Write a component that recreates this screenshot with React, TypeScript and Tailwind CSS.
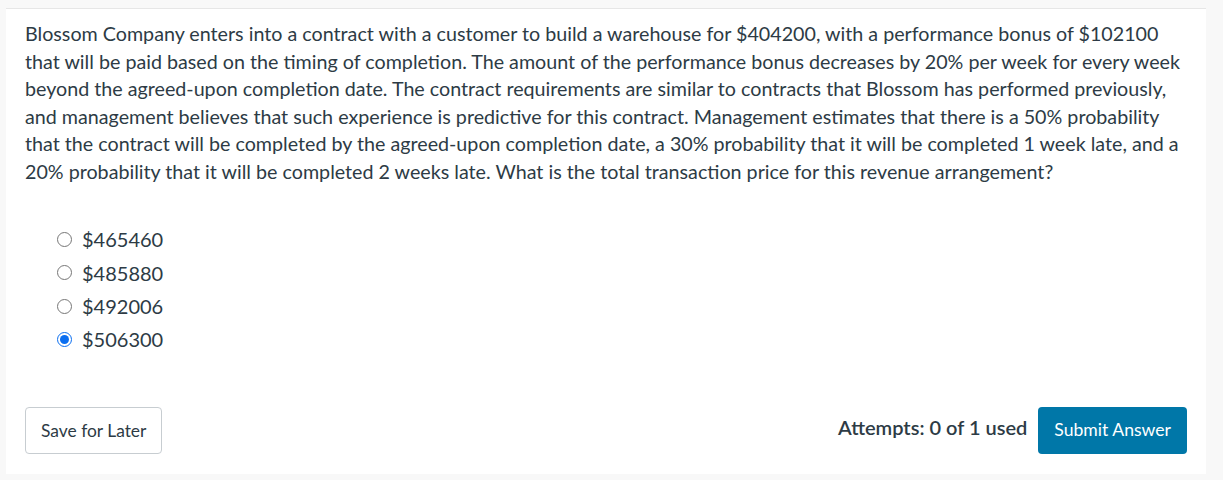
import React, { useState } from "react";

const options = ["$465460", "$485880", "$492006", "$506300"];

const App: React.FC = () => {
  const [selected, setSelected] = useState(3);

  return (
    <div className="min-h-[480px] bg-[#f8f8f8] pl-[6px] pr-[17px] pt-[8px]" style={{ fontFamily: "Lato, 'Open Sans', sans-serif" }}>
      <div className="h-[466px] border-t border-[#e6e6e6] bg-white px-[19px] pt-[11px] text-[#2d3b45]">
        <p className="text-[19.7px] leading-[27.6px]">
          Blossom Company enters into a contract with a customer to build a warehouse for $404200, with a performance bonus of $102100
          that will be paid based on the timing of completion. The amount of the performance bonus decreases by 20% per week for every week
          beyond the agreed-upon completion date. The contract requirements are similar to contracts that Blossom has performed previously,
          and management believes that such experience is predictive for this contract. Management estimates that there is a 50% probability
          that the contract will be completed by the agreed-upon completion date, a 30% probability that it will be completed 1 week late, and a
          20% probability that it will be completed 2 weeks late. What is the total transaction price for this revenue arrangement?
        </p>

        <div className="mt-[37px] flex flex-col pl-[32px]">
          {options.map((opt, i) => (
            <label key={opt} className="flex h-[33.4px] items-center gap-[10px] text-[20px]">
              <input
                type="radio"
                name="answer"
                checked={selected === i}
                onChange={() => setSelected(i)}
                className="m-0 h-[15px] w-[15px] accent-[#0a6ef0]"
              />
              <span>{opt}</span>
            </label>
          ))}
        </div>

        <div className="mt-[51px] flex items-center justify-between">
          <button className="h-[47px] rounded-[4px] border border-[#c7cdd1] bg-white px-[15px] text-[17.4px] text-[#2d3b45]">
            Save for Later
          </button>
          <div className="flex items-center gap-[11px]">
            <span className="pb-[8px] text-[20px] font-semibold text-[#2d3b45]">Attempts: 0 of 1 used</span>
            <button className="h-[47px] rounded-[4px] bg-[#0077a8] px-[16px] text-[17.6px] text-white">
              Submit Answer
            </button>
          </div>
        </div>
      </div>
    </div>
  );
};

export default App;
